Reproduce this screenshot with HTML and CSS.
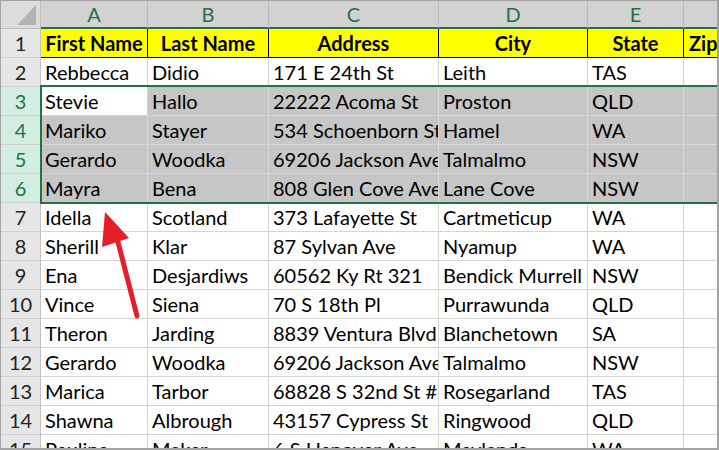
FILE: index.html
```html
<!DOCTYPE html>
<html>
<head>
<meta charset="utf-8">
<link rel="stylesheet" href="styles.css">
</head>
<body>
<div class="frame">
  <div class="grid">
    <div class="corner"><svg width="20" height="21" viewBox="0 0 20 21"><polygon points="19,0 19,20 0,20" fill="#b3b3b3"/></svg></div>
    <div class="ch">A</div><div class="ch">B</div><div class="ch">C</div><div class="ch">D</div><div class="ch">E</div><div class="ch"></div>

    <div class="rh">1</div>
    <div class="c hd">First Name</div><div class="c hd">Last Name</div><div class="c hd">Address</div><div class="c hd">City</div><div class="c hd">State</div><div class="c hd zip">Zip</div>

    <div class="rh">2</div>
    <div class="c">Rebbecca</div><div class="c">Didio</div><div class="c">171 E 24th St</div><div class="c">Leith</div><div class="c">TAS</div><div class="c"></div>

    <div class="rh rs">3</div>
    <div class="c">Stevie</div><div class="c s">Hallo</div><div class="c s">22222 Acoma St</div><div class="c s">Proston</div><div class="c s">QLD</div><div class="c s"></div>

    <div class="rh rs">4</div>
    <div class="c s">Mariko</div><div class="c s">Stayer</div><div class="c s">534 Schoenborn St</div><div class="c s">Hamel</div><div class="c s">WA</div><div class="c s"></div>

    <div class="rh rs">5</div>
    <div class="c s">Gerardo</div><div class="c s">Woodka</div><div class="c s">69206 Jackson Ave</div><div class="c s">Talmalmo</div><div class="c s">NSW</div><div class="c s"></div>

    <div class="rh rs">6</div>
    <div class="c s">Mayra</div><div class="c s">Bena</div><div class="c s">808 Glen Cove Ave</div><div class="c s">Lane Cove</div><div class="c s">NSW</div><div class="c s"></div>

    <div class="rh">7</div>
    <div class="c">Idella</div><div class="c">Scotland</div><div class="c">373 Lafayette St</div><div class="c">Cartmeticup</div><div class="c">WA</div><div class="c"></div>

    <div class="rh">8</div>
    <div class="c">Sherill</div><div class="c">Klar</div><div class="c">87 Sylvan Ave</div><div class="c">Nyamup</div><div class="c">WA</div><div class="c"></div>

    <div class="rh">9</div>
    <div class="c">Ena</div><div class="c">Desjardiws</div><div class="c">60562 Ky Rt 321</div><div class="c">Bendick Murrell</div><div class="c">NSW</div><div class="c"></div>

    <div class="rh">10</div>
    <div class="c">Vince</div><div class="c">Siena</div><div class="c">70 S 18th Pl</div><div class="c">Purrawunda</div><div class="c">QLD</div><div class="c"></div>

    <div class="rh">11</div>
    <div class="c">Theron</div><div class="c">Jarding</div><div class="c">8839 Ventura Blvd</div><div class="c">Blanchetown</div><div class="c">SA</div><div class="c"></div>

    <div class="rh">12</div>
    <div class="c">Gerardo</div><div class="c">Woodka</div><div class="c">69206 Jackson Ave</div><div class="c">Talmalmo</div><div class="c">NSW</div><div class="c"></div>

    <div class="rh">13</div>
    <div class="c">Marica</div><div class="c">Tarbor</div><div class="c">68828 S 32nd St #6</div><div class="c">Rosegarland</div><div class="c">TAS</div><div class="c"></div>

    <div class="rh">14</div>
    <div class="c">Shawna</div><div class="c">Albrough</div><div class="c">43157 Cypress St</div><div class="c">Ringwood</div><div class="c">QLD</div><div class="c"></div>

    <div class="rh">15</div>
    <div class="c">Paulina</div><div class="c">Maker</div><div class="c">6 S Hanover Ave</div><div class="c">Maylands</div><div class="c">WA</div><div class="c"></div>
  </div>

  <div class="selection"></div>

  <svg class="arrow" width="719" height="450" viewBox="0 0 719 450">
    <line x1="137" y1="316" x2="118" y2="242" stroke="#e61e28" stroke-width="5" stroke-linecap="round"/>
    <polygon points="105,212 102,247 129,238" fill="#e61e28"/>
  </svg>
</div>
</body>
</html>
```

FILE: styles.css
```css
* { box-sizing: border-box; }

html, body {
  margin: 0;
  padding: 0;
  background: #ffffff;
}

body {
  width: 719px;
  height: 450px;
  overflow: hidden;
  font-family: Lato, "Liberation Sans", sans-serif;
  color: #000;
}

.frame {
  position: relative;
  width: 719px;
  height: 450px;
  border: 1px solid #a3a3a3;
  border-right-width: 2px;
  border-bottom-width: 2px;
  overflow: hidden;
  background: #ffffff;
}

.grid {
  display: grid;
  grid-template-columns: 40px 107px 121px 170px 149px 96px 60px;
  grid-template-rows: 28px;
  grid-auto-rows: 29px;
}

.corner {
  background: #dcdcdc;
  border-right: 1px solid #bdbdbd;
  border-bottom: 1px solid #bdbdbd;
  display: flex;
  justify-content: flex-end;
  align-items: flex-end;
  padding: 0 3px 2px 0;
}

.corner svg { display: block; }

.ch {
  background: #d2d2d2;
  border-right: 1px solid #bababa;
  border-bottom: 2px solid #217346;
  color: #217346;
  font-size: 20px;
  line-height: 26px;
  text-align: center;
}

.rh {
  background: #e6e6e6;
  border-right: 1px solid #c2c2c2;
  border-bottom: 1px solid #d0d0d0;
  color: #222;
  font-size: 20px;
  line-height: 28px;
  text-align: center;
}

.rh.rs {
  background: #d3eee0;
  color: #217346;
}

.c {
  border-right: 1px solid #d4d4d4;
  border-bottom: 1px solid #d4d4d4;
  padding: 0 4px;
  font-size: 20px;
  line-height: 28px;
  white-space: nowrap;
  overflow: hidden;
}

.c.hd {
  background: #ffff00;
  border-right-color: #000;
  border-bottom-color: #000;
  font-weight: bold;
  text-align: center;
}

.c.hd.zip {
  text-align: left;
  padding-left: 5px;
}

.c.s {
  background: #c6c6c6;
  border-right-color: #d9d9d9;
  border-bottom-color: #d9d9d9;
}

.selection {
  position: absolute;
  left: 39px;
  top: 84px;
  width: 700px;
  height: 119px;
  border: 2px solid #217346;
  pointer-events: none;
}

.arrow {
  position: absolute;
  left: -1px;
  top: -1px;
}
```
